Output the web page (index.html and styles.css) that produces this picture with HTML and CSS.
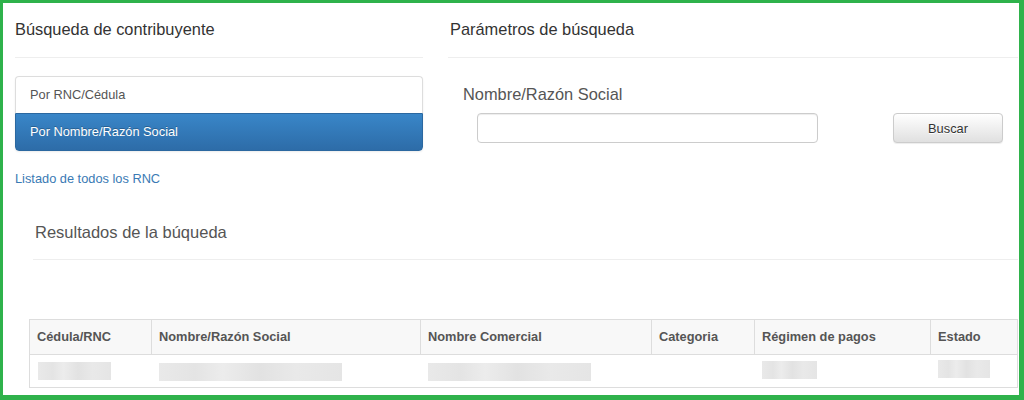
FILE: index.html
```html
<!DOCTYPE html>
<html lang="es">
<head>
<meta charset="utf-8">
<title>Búsqueda de contribuyente</title>
<link rel="stylesheet" href="styles.css">
</head>
<body>
<div class="frame">
  <div class="top-row">
    <section class="col-left">
      <h3 class="section-title">Búsqueda de contribuyente</h3>
      <div class="list-group">
        <a class="list-item">Por RNC/Cédula</a>
        <a class="list-item active">Por Nombre/Razón Social</a>
      </div>
      <a class="link" href="#">Listado de todos los RNC</a>
    </section>
    <section class="col-right">
      <h3 class="section-title right-title">Parámetros de búsqueda</h3>
      <label class="field-label">Nombre/Razón Social</label>
      <div class="field-row">
        <input class="text-input" type="text">
        <button class="btn">Buscar</button>
      </div>
    </section>
  </div>
  <section class="results">
    <h4 class="results-title">Resultados de la búqueda</h4>
    <table class="grid">
      <colgroup>
        <col class="c1"><col class="c2"><col class="c3"><col class="c4"><col class="c5"><col class="c6">
      </colgroup>
      <thead>
        <tr>
          <th>Cédula/RNC</th>
          <th>Nombre/Razón Social</th>
          <th>Nombre Comercial</th>
          <th>Categoria</th>
          <th>Régimen de pagos</th>
          <th>Estado</th>
        </tr>
      </thead>
      <tbody>
        <tr>
          <td><span class="blur b1" style="width:73px"></span></td>
          <td><span class="blur b2" style="width:183px"></span></td>
          <td><span class="blur b2" style="width:163px"></span></td>
          <td></td>
          <td><span class="blur b3" style="width:55px"></span></td>
          <td><span class="blur b4" style="width:52px"></span></td>
        </tr>
      </tbody>
    </table>
  </section>
</div>
</body>
</html>
```

FILE: styles.css
```css
* { box-sizing: border-box; }

html, body {
  margin: 0;
  padding: 0;
  background: #fff;
}

body {
  font-family: "Liberation Sans", Arial, Helvetica, sans-serif;
  font-size: 12.8px;
  color: #333;
}

.frame {
  width: 1024px;
  height: 400px;
  border-style: solid;
  border-color: #2fb24b;
  border-width: 3px 5px 5px 3px;
  overflow: hidden;
  background: #fff;
}

.top-row {
  display: flex;
  align-items: flex-start;
}

.col-left {
  width: 408px;
  margin-left: 12px;
  display: flex;
  flex-direction: column;
  align-items: flex-start;
}

.col-right {
  flex: 1;
  margin-left: 25px;
  margin-right: 1px;
}

.section-title {
  align-self: stretch;
  margin: 0;
  padding: 16px 0 18px;
  font-size: 16.4px;
  line-height: 20px;
  font-weight: normal;
  color: #333;
  border-bottom: 1px solid #eee;
}

.right-title {
  padding-left: 2px;
}

.list-group {
  align-self: stretch;
  margin-top: 18px;
  display: flex;
  flex-direction: column;
  border-radius: 4px;
  box-shadow: 0 1px 2px rgba(0, 0, 0, 0.075);
}

.list-item {
  display: block;
  padding: 9px 14px;
  line-height: 18px;
  font-size: 12.8px;
  color: #555;
  background: #fff;
  border: 1px solid #ddd;
  border-bottom: none;
  border-radius: 4px 4px 0 0;
}

.list-item.active {
  color: #fff;
  background-image: linear-gradient(to bottom, #3986c8 0%, #2d6ca8 100%);
  border: 1px solid #2b68a0;
  border-radius: 0 0 4px 4px;
  text-shadow: 0 -1px 0 #286090;
}

.link {
  margin-top: 19px;
  line-height: 18px;
  font-size: 12.8px;
  color: #3a7ab4;
  text-decoration: none;
}

.field-label {
  display: block;
  margin-top: 26px;
  padding-left: 15px;
  font-size: 16.4px;
  line-height: 20px;
  color: #555;
}

.field-row {
  display: flex;
  align-items: center;
  margin-top: 9px;
  padding-left: 29px;
  padding-right: 15px;
}

.text-input {
  width: 341px;
  height: 30px;
  margin: 0;
  padding: 5px 10px;
  font-family: inherit;
  font-size: 13px;
  border: 1px solid #ccc;
  border-radius: 4px;
  box-shadow: inset 0 1px 1px rgba(0, 0, 0, 0.075);
  background: #fff;
}

.btn {
  margin-left: auto;
  width: 110px;
  height: 30px;
  padding: 0;
  font-family: inherit;
  font-size: 12.8px;
  color: #333;
  border: 1px solid #ccc;
  border-radius: 4px;
  background-image: linear-gradient(to bottom, #fff 0%, #e0e0e0 100%);
  text-shadow: 0 1px 0 #fff;
  box-shadow: inset 0 1px 0 rgba(255, 255, 255, 0.15), 0 1px 1px rgba(0, 0, 0, 0.075);
}

.results {
  margin-top: 34px;
  padding-left: 26px;
  padding-right: 1px;
}

.results-title {
  margin: 0 0 0 4px;
  padding: 0 0 17px 2px;
  font-size: 16.5px;
  line-height: 20px;
  font-weight: normal;
  color: #555;
  border-bottom: 1px solid #eee;
}

.grid {
  margin-top: 59px;
  width: 988px;
  border-collapse: collapse;
  table-layout: fixed;
  border: 1px solid #ddd;
}

.c1 { width: 122px; }
.c2 { width: 269px; }
.c3 { width: 231px; }
.c4 { width: 103px; }
.c5 { width: 176px; }
.c6 { width: 87px; }

.grid th {
  text-align: left;
  padding: 8px 7px 8px 7px;
  height: 35px;
  line-height: 18px;
  font-size: 12.8px;
  font-weight: bold;
  color: #555;
  background: #f8f8f8;
  border: 1px solid #ddd;
  white-space: nowrap;
}

.grid td {
  padding: 0 6px 0 7px;
  height: 33px;
  border-top: 1px solid #ddd;
  vertical-align: middle;
}

.blur {
  display: block;
  height: 18px;
  background-image: linear-gradient(to right, #e9e9e9 0%, #e4e4e4 20%, #ececec 35%, #e2e2e2 55%, #e9e9e9 75%, #e5e5e5 100%);
  filter: blur(0.6px);
}

.b1 { margin-left: 1px; }
.b2 { margin-top: 1px; }
.b3 { margin-left: 0; margin-top: -2px; }
.b4 { margin-top: -4px; }
```
